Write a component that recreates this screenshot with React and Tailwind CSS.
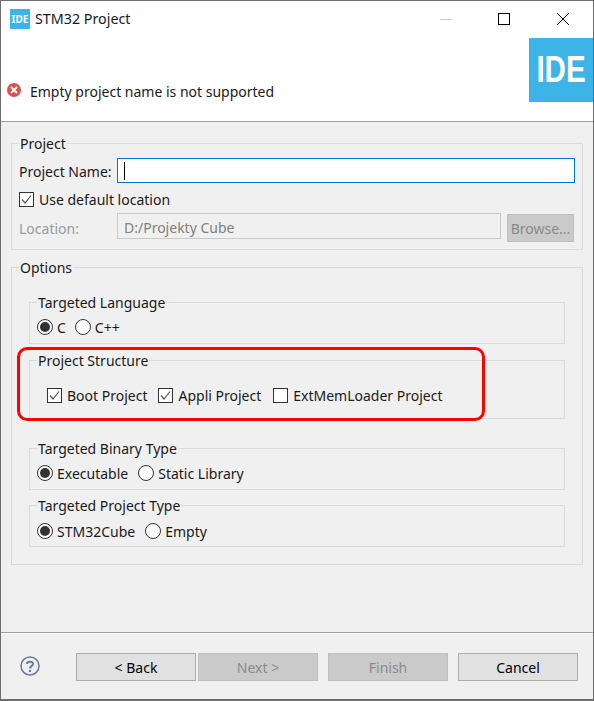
import React from 'react'

const font = { fontFamily: '"Noto Sans", sans-serif' }

const Check = ({ checked, className = '' }) => (
  <span className={`flex h-[15px] w-[15px] shrink-0 items-center justify-center border border-[#333333] bg-white ${className}`}>
    {checked && (
      <svg width="13" height="13" viewBox="0 0 13 13" fill="none">
        <path d="M2 6.5 L5 10 L11 2.5" stroke="#555555" strokeWidth="1.2" />
      </svg>
    )}
  </span>
)

const Radio = ({ selected }) => (
  <span className="flex h-4 w-4 shrink-0 items-center justify-center rounded-full border border-[#333333] bg-white">
    {selected && <span className="h-[10px] w-[10px] rounded-full bg-[#333333]" />}
  </span>
)

const Option = ({ label, selected, className = '' }) => (
  <label className={`flex h-5 items-center gap-1 ${className}`}>
    <Radio selected={selected} />
    <span className="pt-[2px]">{label}</span>
  </label>
)

const CheckOption = ({ label, checked, className = '' }) => (
  <label className={`flex h-5 items-center gap-[5px] ${className}`}>
    <Check checked={checked} />
    <span className="pt-[2px]">{label}</span>
  </label>
)

const Group = ({ title, className = '', children }) => (
  <fieldset className={`border border-[#dadada] ${className}`}>
    <legend className="ml-[7px] h-5 px-px pt-px leading-5">{title}</legend>
    {children}
  </fieldset>
)

const Button = ({ label, disabled, className = '' }) => (
  <button
    className={`h-7 w-[120px] border pt-[2px] text-center ${
      disabled ? 'border-[#bfbfbf] bg-[#cacaca] text-[#8a8a8a]' : 'border-[#adadad] bg-[#e1e1e1] text-black'
    } ${className}`}
  >
    {label}
  </button>
)

const App = () => {
  return (
    <div
      style={font}
      className="relative flex h-[701px] w-[594px] flex-col border border-b-2 border-[#6e6e6e] bg-[#f0f0f0] text-[14px] leading-5 text-[#1a1a1a]"
    >
      {/* title + message banner */}
      <div className="relative h-[121px] shrink-0 border-b border-[#a0a0a0] bg-white">
        <div className="flex h-[36px] items-center pl-[9px]">
          <span className="flex h-5 w-5 items-center justify-center bg-[#3db4e8] text-[10px] font-bold leading-none text-white">IDE</span>
          <span className="ml-[5px] text-[14.3px]">STM32 Project</span>
          <div className="ml-auto flex items-center">
            <span className="mr-[46px] h-px w-3 bg-[#c8c8c8]" />
            <span className="mr-[47px] h-3 w-3 border border-black" />
            <svg className="mr-[24px]" width="12" height="12" viewBox="0 0 12 12">
              <path d="M0 0 L12 12 M12 0 L0 12" stroke="#000" strokeWidth="1" />
            </svg>
          </div>
        </div>
        <div className="mt-[43px] flex h-5 items-center pl-[6px]">
          <span className="-mt-px flex h-[14px] w-[14px] items-center justify-center rounded-full bg-[#d9534f]">
            <svg width="8" height="8" viewBox="0 0 8 8">
              <path d="M1 1 L7 7 M7 1 L1 7" stroke="#fff" strokeWidth="1.8" />
            </svg>
          </span>
          <span className="ml-[9px] pt-[3px]">Empty project name is not supported</span>
        </div>
        <div className="absolute right-0 top-[37px] flex h-16 w-16 items-center justify-center bg-[#3db4e8] text-white">
          <span className="scale-x-[0.82] text-[36px] font-bold leading-none [font-family:'Liberation_Sans',sans-serif]">IDE</span>
        </div>
      </div>

      <div className="flex-1 px-[10px] pt-[11px]">
        <Group title="Project">
          <div className="pb-[7px] pl-[7px]">
            <div className="mt-[5px] flex items-center">
              <span className="w-[98px] pt-[2px]">Project Name:</span>
              <div className="flex h-[25px] w-[458px] items-center border border-[#0078d7] bg-white pl-[6px]">
                <span className="h-[18px] w-px bg-black" />
              </div>
            </div>
            <CheckOption className="mt-[6px]" label="Use default location" checked />
            <div className="mt-1 flex items-start">
              <span className="mt-[6px] w-[98px] text-[#9a9a9a]">Location:</span>
              <div className="flex h-[26px] w-[384px] items-center border border-[#c8c8c8] pl-[6px] pt-[4px] text-[#7f7f7f]">D:/Projekty Cube</div>
              <Button className="ml-[6px] mt-px !w-[67px]" label="Browse..." disabled />
            </div>
          </div>
        </Group>

        <Group title="Options" className="mt-[7px]">
          <div className="px-[17px] pb-[17px]">
            <Group title="Targeted Language" className="mt-[15px]">
              <div className="mt-[5px] flex gap-[9px] pb-[6px] pl-[7px]">
                <Option label="C" selected />
                <Option label="C++" />
              </div>
            </Group>
            <Group title="Project Structure" className="mt-[6px]">
              <div className="mt-[15px] flex pb-[13px] pl-[17px]">
                <CheckOption label="Boot Project" checked />
                <CheckOption className="ml-[11px]" label="Appli Project" checked />
                <CheckOption className="ml-[12px]" label="ExtMemLoader Project" />
              </div>
            </Group>
            <Group title="Targeted Binary Type" className="mt-[19px]">
              <div className="mt-[5px] flex gap-[10px] pb-[6px] pl-[7px]">
                <Option label="Executable" selected />
                <Option label="Static Library" />
              </div>
            </Group>
            <Group title="Targeted Project Type" className="mt-[5px]">
              <div className="mt-[6px] flex gap-[10px] pb-[5px] pl-[7px]">
                <Option label="STM32Cube" selected />
                <Option label="Empty" />
              </div>
            </Group>
          </div>
        </Group>
      </div>

      {/* footer */}
      <div className="relative flex h-[67px] shrink-0 items-start border-t border-[#a0a0a0] pl-[19px] pt-[20px]">
        <span className="absolute left-0 right-0 top-0 h-px bg-white" />
        <svg className="mt-[3px]" width="20" height="20" viewBox="0 0 20 20" fill="none">
          <circle cx="10" cy="10" r="9" stroke="#6b7a99" strokeWidth="1.5" />
          <path d="M7 8 C7 5 13 5 13 8 C13 10 10 10 10 12.5" stroke="#6b7a99" strokeWidth="2" />
          <circle cx="10" cy="15" r="1.2" fill="#6b7a99" />
        </svg>
        <Button className="ml-[36px]" label="< Back" />
        <Button className="ml-[2px]" label="Next >" disabled />
        <Button className="ml-[10px]" label="Finish" disabled />
        <Button className="ml-[10px]" label="Cancel" />
      </div>

      {/* red highlight drawn over the dialog */}
      <div className="pointer-events-none absolute left-[16px] top-[346px] h-[74px] w-[468px] rounded-[10px] border-[3px] border-[#ff0000]" />
    </div>
  )
}

export default App
